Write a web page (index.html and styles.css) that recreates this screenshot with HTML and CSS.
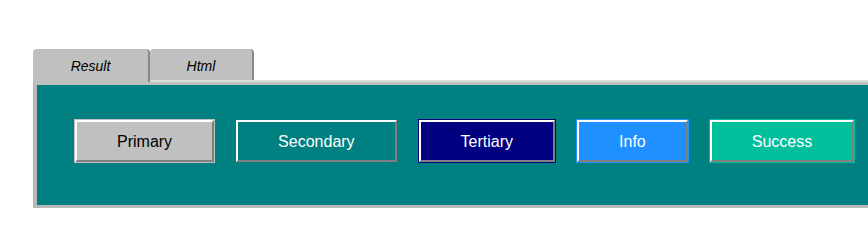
FILE: index.html
```html
<!DOCTYPE html>
<html>
<head>
    <title>Buttons</title>
    <link rel="stylesheet" href="styles.css">
</head>
<body>
    <div class="demo">
        <!-- tabs -->
        <div class="tabs">
            <div class="tab tab-active">Result</div>
            <div class="tab">Html</div>
        </div>

        <!-- result panel -->
        <div class="panel">
            <button class="btn btn-primary">Primary</button>
            <button class="btn btn-secondary">Secondary</button>
            <button class="btn btn-tertiary">Tertiary</button>
            <button class="btn btn-info">Info</button>
            <button class="btn btn-success">Success</button>
        </div>
    </div>
</body>
</html>
```

FILE: styles.css
```css
body {
    margin: 0;
    background-color: #fff;
    font-family: "Liberation Sans", Arial, sans-serif;
}
.demo {
    padding: 49px 0 0 33px;
}
.tabs {
    display: flex;
    align-items: flex-start;
    height: 31px;
    border-bottom: 2px solid #dcdcdc;
}
.tab {
    position: relative;
    height: 31px;
    line-height: 34px;
    background-color: #c0c0c0;
    border-radius: 4px 4px 0 0;
    border-right: 2px solid #888;
    font-size: 14px;
    font-style: italic;
    color: #000;
    text-align: center;
    box-sizing: border-box;
}
.tab-active {
    width: 117px;
    height: 33px;
    z-index: 1;
}
.tab + .tab {
    width: 104px;
}
.panel {
    display: flex;
    gap: 22px;
    height: 85px;
    padding: 35px 0 0 38px;
    background-color: #008080;
    border-top: 3px solid #c0c0c0;
    border-left: 4px solid #b8b8b8;
    border-bottom: 3px solid #b8b8b8;
    align-items: flex-start;
}
.btn {
    padding: 11px 40px 9px;
    line-height: 18px;
    font-family: "Liberation Sans", Arial, sans-serif;
    font-size: 16px;
    color: #fff;
    border: 2px solid;
    border-color: #fff #808080 #808080 #fff;
    cursor: pointer;
}
.btn-primary {
    background-color: #c0c0c0;
    color: #000;
    box-shadow: 0 0 0 1px #c0c0c0;
}
.btn-secondary {
    background-color: #008080;
    box-shadow: 0 0 0 1px #008080;
}
.btn-tertiary {
    background-color: #000080;
    box-shadow: 0 0 0 1px #000080;
}
.btn-info {
    background-color: #1e90ff;
    box-shadow: 0 0 0 1px #1e90ff;
}
.btn-success {
    background-color: #00c09c;
    box-shadow: 0 0 0 1px #00c09c;
}
```
